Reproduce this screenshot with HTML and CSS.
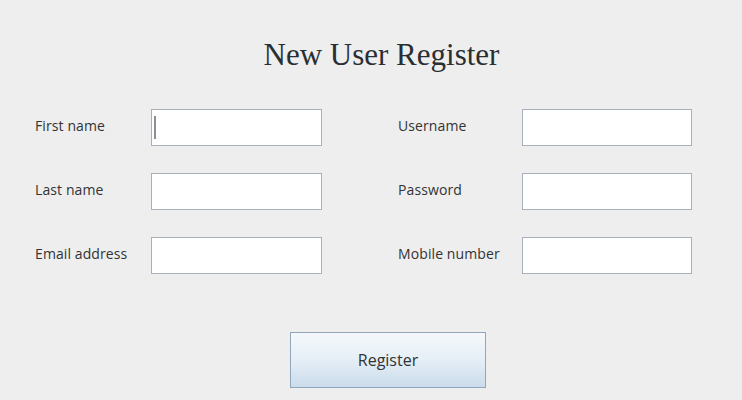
FILE: index.html
```html
<!DOCTYPE html>
<html>
<head>
<meta charset="utf-8">
<link rel="stylesheet" href="styles.css">
</head>
<body>
<div class="page">
  <h1 class="title">New User Register</h1>
  <form class="form">
    <label class="label">First name</label>
    <div class="field focused"><span class="caret"></span></div>
    <span></span>
    <label class="label">Username</label>
    <div class="field"></div>

    <label class="label">Last name</label>
    <div class="field"></div>
    <span></span>
    <label class="label">Password</label>
    <div class="field"></div>

    <label class="label">Email address</label>
    <div class="field"></div>
    <span></span>
    <label class="label">Mobile number</label>
    <div class="field"></div>
  </form>
  <div class="actions">
    <button type="button" class="btn">Register</button>
  </div>
</div>
</body>
</html>
```
FILE: styles.css
```css
html, body {
  margin: 0;
  padding: 0;
  background: #eeeeee;
}
.page {
  width: 742px;
  height: 400px;
  box-sizing: border-box;
  padding-top: 37px;
}
.title {
  margin: 0;
  text-align: center;
  font-family: "Liberation Serif", "Times New Roman", serif;
  font-weight: normal;
  font-size: 31px;
  line-height: 36px;
  color: #2a2e33;
  padding-left: 21px;
}
.form {
  display: grid;
  grid-template-columns: 116px 171px 76px 124px 170px;
  grid-auto-rows: 37px;
  row-gap: 27px;
  margin-top: 36px;
  padding-left: 35px;
  align-items: center;
}
.label {
  font-family: "Open Sans", "DejaVu Sans", sans-serif;
  font-size: 14px;
  letter-spacing: 0.1px;
  color: #333333;
  position: relative;
  top: -2px;
}
.field {
  height: 37px;
  box-sizing: border-box;
  background: #ffffff;
  border: 1px solid #a7b1bb;
  position: relative;
}
.caret {
  position: absolute;
  left: 2px;
  top: 6px;
  width: 2px;
  height: 23px;
  background: #8a9096;
}
.actions {
  padding-left: 290px;
  margin-top: 58px;
}
.btn {
  width: 196px;
  height: 56px;
  box-sizing: border-box;
  border: 1px solid #8fa6bc;
  background: linear-gradient(to bottom, #f4f8fb 0%, #e7f0f7 45%, #cbdceb 100%);
  font-family: "Open Sans", "DejaVu Sans", sans-serif;
  font-size: 16px;
  color: #333333;
  padding: 0;
}
```
